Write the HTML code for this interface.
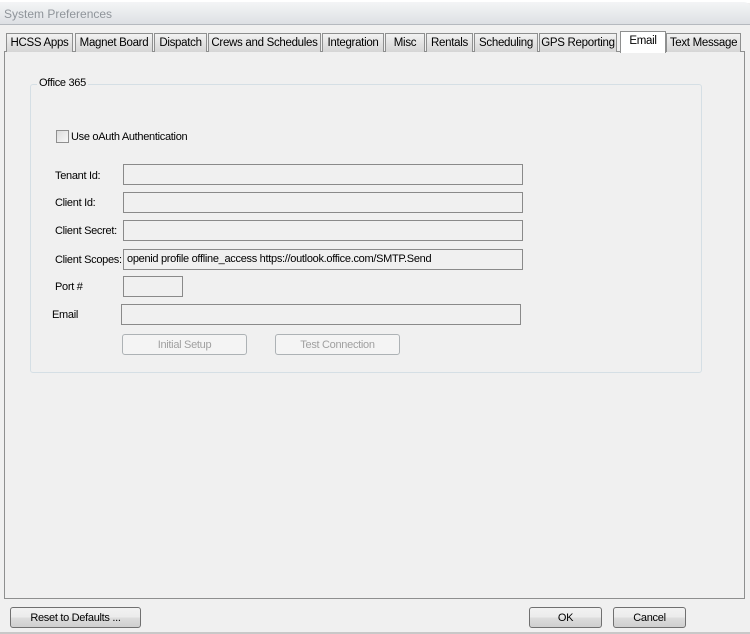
<!DOCTYPE html>
<html><head><style>
*{margin:0;padding:0;box-sizing:border-box}
body{width:750px;height:634px;background:#f0f0f0;font-family:"Liberation Sans",sans-serif;font-size:11px;color:#000;position:relative;overflow:hidden}
.a{position:absolute;white-space:nowrap}
.tab{position:absolute;top:33px;height:19px;border:1px solid #8e8f8f;border-bottom:none;background:linear-gradient(#f2f2f2,#e0e0e0 60%,#d6d6d6);text-align:center;line-height:18px;letter-spacing:-0.3px;white-space:nowrap;font-size:11.5px}
.inp{position:absolute;height:21px;border:1px solid #8a8a8a;background:#f0f0f0;line-height:19px;padding-left:3px;letter-spacing:-0.3px;white-space:nowrap}
.lbl{position:absolute;letter-spacing:-0.3px;white-space:nowrap}
.btn{position:absolute;height:21px;border:1px solid #707070;border-radius:3px;background:linear-gradient(#f2f2f2,#ebebeb 50%,#dddddd 51%,#cfcfcf);text-align:center;line-height:20px;letter-spacing:-0.3px}
.dis{border-color:#adb2b5;background:#f4f4f4;color:#a0a0a0}
</style></head><body>
<div class="a" style="left:0;top:0;width:750px;height:3px;background:#fff"></div>
<div class="a" style="left:0;top:2px;width:750px;height:23px;background:linear-gradient(#f4f5f6,#dde0e4);border-bottom:1px solid #b5b9bf;border-top-right-radius:6px"></div>
<div class="a" style="left:4px;top:7px;font-size:12px;color:#8f949a">System Preferences</div>

<div class="a" style="left:4px;top:51px;width:741px;height:548px;border:1px solid #8e8f8f;background:#f0f0f0"></div>

<div class="tab" style="left:6px;width:67px">HCSS Apps</div>
<div class="tab" style="left:75px;width:78px">Magnet Board</div>
<div class="tab" style="left:154px;width:53px">Dispatch</div>
<div class="tab" style="left:208px;width:113px">Crews and Schedules</div>
<div class="tab" style="left:322px;width:62px">Integration</div>
<div class="tab" style="left:385px;width:40px">Misc</div>
<div class="tab" style="left:426px;width:47px">Rentals</div>
<div class="tab" style="left:474px;width:64px">Scheduling</div>
<div class="tab" style="left:539px;width:78px">GPS Reporting</div>
<div class="tab" style="left:620px;top:31px;height:22px;width:46px;background:#fff;line-height:19px">Email</div>
<div class="tab" style="left:666px;width:75px">Text Message</div>

<div class="a" style="left:30px;top:84px;width:672px;height:289px;border:1px solid #d5dfe5;border-radius:3px"></div>
<div class="a" style="left:37px;top:77px;padding:0 2px;background:#f0f0f0;letter-spacing:-0.3px">Office 365</div>

<div class="a" style="left:56px;top:130px;width:13px;height:13px;border:1px solid #8f8f8f;background:linear-gradient(135deg,#dcdcdc,#f8f8f8)"></div>
<div class="lbl" style="left:71px;top:131px">Use oAuth Authentication</div>

<div class="lbl" style="left:55px;top:170px">Tenant Id:</div>
<div class="inp" style="left:123px;top:164px;width:400px"></div>
<div class="lbl" style="left:55px;top:197px">Client Id:</div>
<div class="inp" style="left:123px;top:192px;width:400px"></div>
<div class="lbl" style="left:55px;top:225px">Client Secret:</div>
<div class="inp" style="left:123px;top:220px;width:400px"></div>
<div class="lbl" style="left:55px;top:254px">Client Scopes:</div>
<div class="inp" style="left:123px;top:249px;width:400px">openid profile offline_access https://outlook.office.com/SMTP.Send</div>
<div class="lbl" style="left:55px;top:281px">Port #</div>
<div class="inp" style="left:123px;top:276px;width:60px"></div>
<div class="lbl" style="left:52px;top:309px">Email</div>
<div class="inp" style="left:121px;top:304px;width:400px"></div>

<div class="btn dis" style="left:122px;top:334px;width:125px">Initial Setup</div>
<div class="btn dis" style="left:275px;top:334px;width:125px">Test Connection</div>

<div class="btn" style="left:10px;top:607px;width:131px">Reset to Defaults ...</div>
<div class="btn" style="left:529px;top:607px;width:73px">OK</div>
<div class="btn" style="left:613px;top:607px;width:73px">Cancel</div>
<div class="a" style="left:0;top:632px;width:750px;height:2px;background:#c8c8c8"></div>
</body></html>
